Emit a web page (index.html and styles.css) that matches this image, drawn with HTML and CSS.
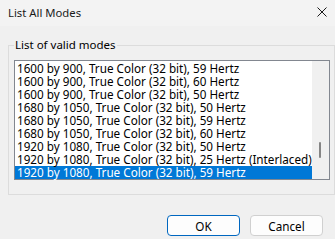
FILE: index.html
```html
<!DOCTYPE html>
<html lang="en">
<head>
    <meta charset="UTF-8">
    <title>List All Modes</title>
    <link rel="stylesheet" href="styles.css">
</head>
<body>
    <div class="dialog">
        <div class="titlebar">
            <span class="title">List All Modes</span>
            <svg class="close" width="10" height="10" viewBox="0 0 10 10">
                <path d="M0.5 0.5 L9.5 9.5 M9.5 0.5 L0.5 9.5" stroke="#1a1a1a" stroke-width="1" fill="none"/>
            </svg>
        </div>
        <div class="body">
            <fieldset class="group">
                <legend>List of valid modes</legend>
                <div class="listbox">
                    <ul class="items">
                        <li>1600 by 900, True Color (32 bit), 59 Hertz</li>
                        <li>1600 by 900, True Color (32 bit), 60 Hertz</li>
                        <li>1600 by 900, True Color (32 bit), 50 Hertz</li>
                        <li>1680 by 1050, True Color (32 bit), 50 Hertz</li>
                        <li>1680 by 1050, True Color (32 bit), 59 Hertz</li>
                        <li>1680 by 1050, True Color (32 bit), 60 Hertz</li>
                        <li>1920 by 1080, True Color (32 bit), 50 Hertz</li>
                        <li>1920 by 1080, True Color (32 bit), 25 Hertz (Interlaced)</li>
                        <li class="selected">1920 by 1080, True Color (32 bit), 59 Hertz</li>
                    </ul>
                    <div class="scrollbar">
                        <div class="thumb"></div>
                    </div>
                </div>
            </fieldset>
            <div class="buttons">
                <button class="btn default">OK</button>
                <button class="btn">Cancel</button>
            </div>
        </div>
    </div>
</body>
</html>
```

FILE: styles.css
```css
body {
    margin: 0;
    padding: 0;
    background-color: #f0f0f0;
    font-family: "Noto Sans", "Open Sans", sans-serif;
    font-size: 11.5px;
    color: #000;
}
.dialog {
    width: 335px;
    height: 239px;
    overflow: hidden;
}
.titlebar {
    height: 26px;
    background-color: #f3f3f3;
    display: flex;
    align-items: center;
    justify-content: space-between;
    padding: 0 8px 2px 8px;
    box-sizing: border-box;
}
.title {
    color: #1a1a1a;
    font-size: 11.3px;
}
.body {
    padding: 0 11px 0 8px;
}
/* Skupina */
.group {
    margin: 11px 0 0 0;
    padding: 7px 4px 14px 5px;
    border: 1px solid #dcdcdc;
    border-radius: 0;
}
.group legend {
    padding: 0 1px;
    margin-left: 0;
    line-height: 16px;
    color: #000;
}
.listbox {
    display: flex;
    height: 118px;
    border: 1px solid #828790;
    background-color: #ffffff;
}
.items {
    flex: 1;
    list-style: none;
    margin: 0;
    padding: 1px 0 0 0;
}
.items li {
    height: 13px;
    line-height: 13px;
    padding-left: 2px;
    white-space: nowrap;
    font-size: 11.7px;
}
.items li.selected {
    background-color: #0078d7;
    color: #ffffff;
}
.scrollbar {
    width: 17px;
    background-color: #f0f0f0;
    position: relative;
}
.thumb {
    position: absolute;
    left: 7px;
    top: 81px;
    width: 2px;
    height: 16px;
    background-color: #858585;
    border-radius: 1px;
}
/* Tlacitka */
.buttons {
    display: flex;
    justify-content: flex-end;
    gap: 10px;
    margin-top: 20px;
    padding-right: 1px;
}
.btn {
    width: 73px;
    height: 21px;
    font-family: inherit;
    font-size: 11.7px;
    background-color: #fdfdfd;
    border: 1px solid #d0d0d0;
    border-radius: 4px;
    color: #000;
    padding: 0;
}
.btn.default {
    border-color: #0067c0;
}
```
